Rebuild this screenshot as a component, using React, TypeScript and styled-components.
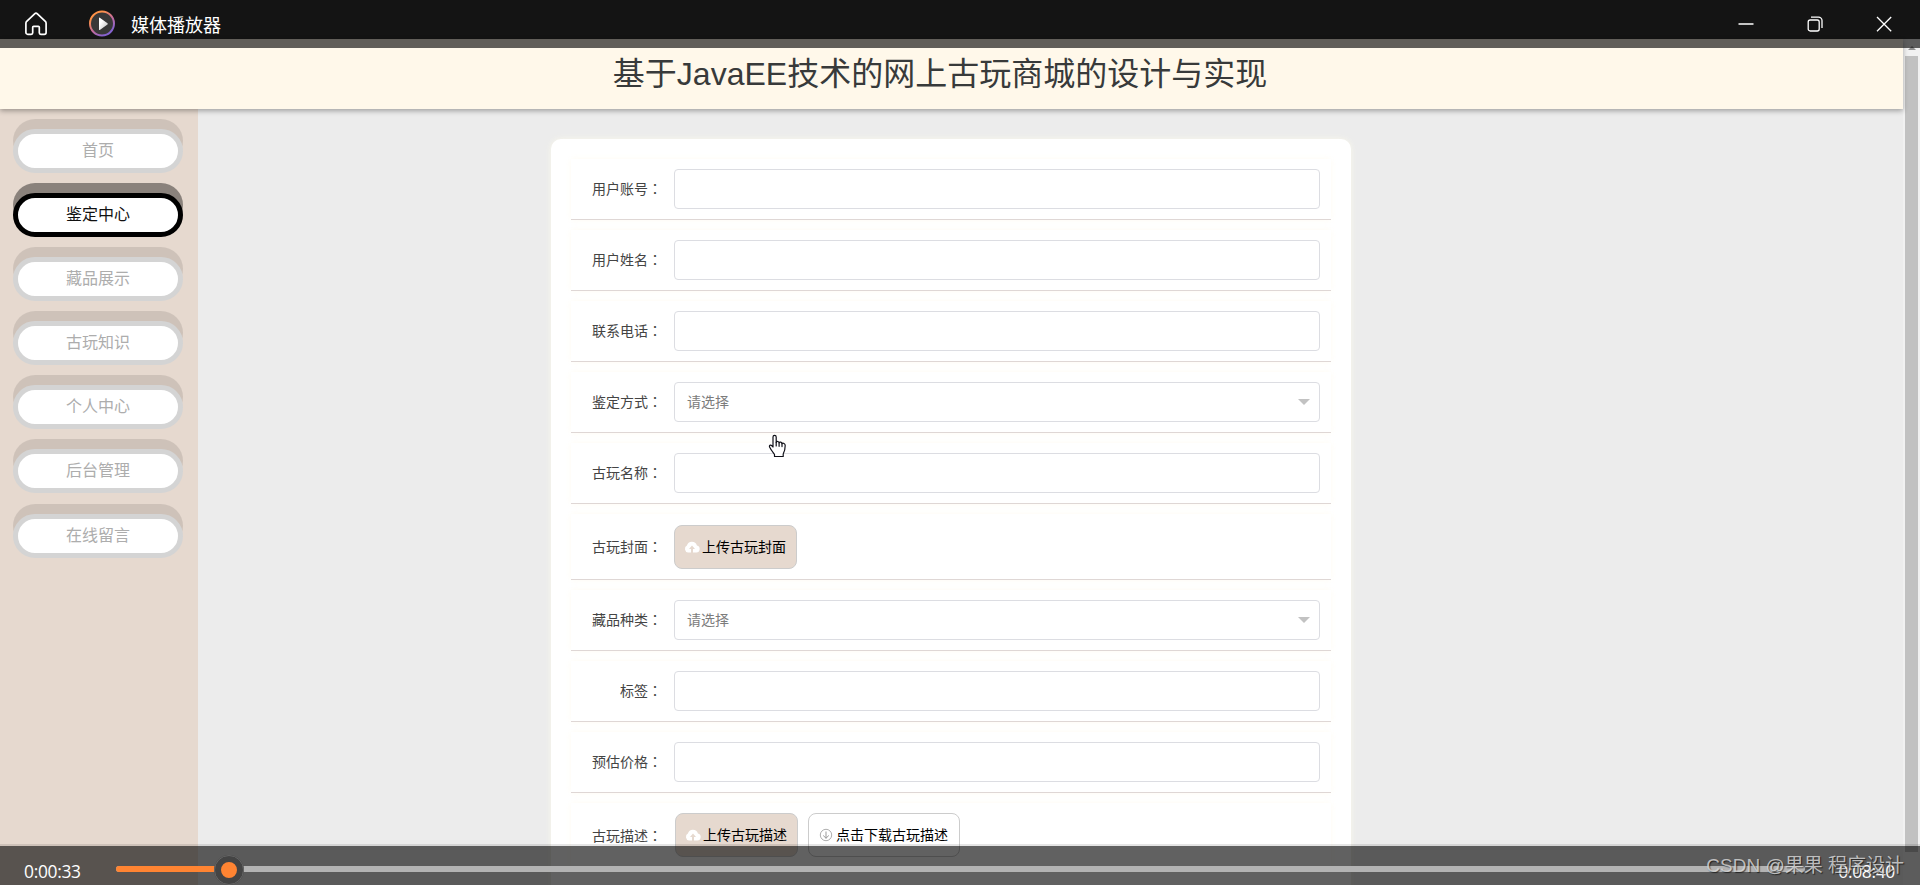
import React from 'react';
import styled, { createGlobalStyle } from 'styled-components';

const Global = createGlobalStyle`
  * { box-sizing: border-box; }
  html, body { margin: 0; padding: 0; overflow: hidden; }
  body { font-family: "Liberation Sans", "Noto Sans CJK SC", sans-serif; }
`;

const Player = styled.div`
  position: relative;
  display: flex;
  flex-direction: column;
  width: 1920px;
  height: 885px;
  overflow: hidden;
  background: #ececec;
`;
const TitleBar = styled.header`
  display: flex;
  align-items: center;
  height: 39px;
  flex: none;
  padding: 9px 27px 0 24px;
  background: #141414;
  color: #fff;
`;
const AppName = styled.span`
  flex: 1;
  margin-left: 15px;
  font: 400 18px/26px "Noto Sans CJK SC", sans-serif;
  padding-bottom: 1px;
`;
const HomeIcon = styled.svg`
  width: 24px;
  height: 24px;
  margin-right: 40px;
`;
const WindowButtons = styled.div`
  display: flex;
  gap: 51px;
  padding-bottom: 1px;
`;
const Page = styled.div`
  position: relative;
  display: flex;
  flex: 1;
  min-height: 0;
`;
const Content = styled.div`
  display: flex;
  flex-direction: column;
  width: 1903px;
`;
const Banner = styled.h1`
  position: relative;
  z-index: 1;
  flex: none;
  height: 70px;
  margin: 0;
  padding: 15px 23px 0 0;
  background: #fff8ea;
  box-shadow: 0 2px 5px rgba(0, 0, 0, 0.32);
  color: #383a3a;
  font-weight: 400;
  font-size: 32px;
  line-height: 40px;
  text-align: center;
`;
const Body = styled.div`
  display: flex;
  flex: 1;
  min-height: 0;
`;
const Sidebar = styled.nav`
  display: flex;
  flex-direction: column;
  gap: 20.1px;
  width: 198px;
  flex: none;
  padding: 20px 15px 0 13px;
  background: #e6d9cf;
`;
const NavItem = styled.a<{ $active?: boolean }>`
  flex: none;
  height: 44px;
  border: 5px solid ${p => (p.$active ? '#000' : '#d4d4d4')};
  border-radius: 22px;
  background: #fff;
  box-shadow: 0 -10px 0 ${p => (p.$active ? 'rgba(0,0,0,.4)' : 'rgba(0,0,0,.1)')};
  color: ${p => (p.$active ? '#111' : '#adadad')};
  font: 400 16px/31px "Noto Sans CJK SC", sans-serif;
  text-align: center;
`;
const Main = styled.main`
  flex: 1;
  padding: 30px 0 0 353px;
`;
const Card = styled.form`
  display: flex;
  flex-direction: column;
  gap: 10px;
  width: 800px;
  height: 900px;
  padding: 20px;
  border-radius: 10px;
  background: #fff;
  box-shadow: 0 0 6px rgba(255, 253, 235, 0.7);
`;
const Row = styled.div<{ $tall?: boolean }>`
  display: flex;
  align-items: center;
  flex: none;
  height: ${p => (p.$tall ? 66 : 61)}px;
  padding-right: 11px;
  border-bottom: 1px solid #dfd7d5;
  box-shadow: 0 0 6px rgba(255, 248, 225, 0.4);
`;
const Label = styled.label`
  width: 103px;
  padding: 0 12px 2px 0;
  color: #444;
  font: 400 14px/20px "Noto Sans CJK SC", sans-serif;
  text-align: right;
  white-space: nowrap;
`;
const Colon = styled.span`
  font-family: "Noto Sans CJK TC", sans-serif;
`;
const Field = styled.div`
  display: flex;
  align-items: center;
  justify-content: space-between;
  flex: 1;
  height: 40px;
  padding: 0 9px 2px 12px;
  border: 1px solid #dcdde2;
  border-radius: 4px;
  background: #fff;
  color: #7c7c7c;
  font: 400 14px/20px "Noto Sans CJK SC", sans-serif;
`;
const Caret = styled.i`
  border: 6px solid transparent;
  border-top-color: #c2c2c2;
  border-bottom: 0;
  margin-top: 1px;
`;
const Actions = styled.div<{ $indent?: boolean }>`
  display: flex;
  gap: 10px;
  padding: ${p => (p.$indent ? '0 0 1px 1px' : '1px 0 0 0')};
`;
const FileButton = styled.button<{ $plain?: boolean }>`
  display: flex;
  align-items: center;
  gap: ${p => (p.$plain ? 4 : 3)}px;
  width: ${p => (p.$plain ? 152 : 123)}px;
  height: 44px;
  padding: 0 0 0 ${p => (p.$plain ? 10 : 9)}px;
  border: 1px solid #ccc;
  border-radius: 8px;
  background: ${p => (p.$plain ? '#fff' : '#e6d9cf')};
  color: #000;
  font: 400 14px/20px "Noto Sans CJK SC", sans-serif;
  white-space: nowrap;
`;
const ButtonText = styled.span`
  margin-left: -1px;
  padding-bottom: 2px;
`;
const Scrollbar = styled.div`
  display: flex;
  flex-direction: column;
  align-items: center;
  width: 17px;
  padding: 7px 0 0 0;
  background: #f1f1f1;
`;
const ScrollUp = styled.i`
  border: 4px solid transparent;
  border-bottom-color: #909090;
  border-top: 0;
  margin-bottom: 6px;
`;
const ScrollThumb = styled.div`
  width: 13px;
  height: 796px;
  background: #c1c1c1;
`;
const TopShade = styled.div`
  position: absolute;
  z-index: 2;
  inset: 0 0 auto 0;
  height: 9px;
  background: rgba(0, 0, 0, 0.62);
`;
const Controls = styled.footer`
  position: absolute;
  z-index: 3;
  inset: auto 0 0 0;
  display: flex;
  align-items: center;
  height: 41px;
  padding: 10px 25px 0 24px;
  border-top: 2px solid rgba(0, 0, 0, 0.1);
  background: rgba(0, 0, 0, 0.62);
  background-clip: padding-box;
  color: #fff;
  font: 17.4px/24px "Open Sans", "Noto Sans", sans-serif;
`;
const Time = styled.span<{ $end?: boolean }>`
  width: ${p => (p.$end ? 'auto' : '92px')};
  margin-left: ${p => (p.$end ? 'auto' : 0)};
  letter-spacing: -0.3px;
`;
const Track = styled.div`
  display: flex;
  align-items: center;
  width: 1689px;
  height: 6px;
  margin-top: -3px;
  border-radius: 3px;
  background: #b3b3b3;
`;
const Played = styled.div`
  width: 99px;
  height: 6px;
  border-radius: 3px 0 0 3px;
  background: #ff8432;
`;
const Thumb = styled.div`
  width: 30px;
  height: 30px;
  flex: none;
  margin: 2px 0 0 -1px;
  border: 7px solid #444;
  border-radius: 50%;
  background: #ff8432;
  outline: 1px solid #666;
  outline-offset: -1px;
`;
const Watermark = styled.div`
  position: absolute;
  z-index: 4;
  right: 16px;
  bottom: 4px;
  color: rgba(222, 222, 222, 0.8);
  font: 400 19px/30px "Liberation Sans", "Noto Sans CJK SC", sans-serif;
  text-shadow: 1px 1px 1px rgba(0, 0, 0, 0.6);
  white-space: nowrap;
`;
const Cursor = styled.svg`
  position: absolute;
  z-index: 3;
  left: 768px;
  top: 434px;
  width: 19px;
  height: 24px;
`;

const CloudIcon = () => (
  <svg width="16" height="12" viewBox="0 0 16 12">
    <path fill="#fff" d="M4 11.5A3.7 3.7 0 0 1 2.9 4.6 5.2 5.2 0 0 1 12.9 4.4 3.6 3.6 0 0 1 12.3 11.5H9V8h2L8 4.5 5 8h2v3.5z" />
  </svg>
);
const DownloadIcon = () => (
  <svg width="14" height="14" viewBox="0 0 14 14" fill="none" stroke="#999">
    <circle cx="7" cy="7" r="5.7" strokeWidth="0.8" />
    <path d="M7 3.5v7M4.2 7.5 7 10.2l2.8-2.7" />
  </svg>
);

const menu = ['首页', '鉴定中心', '藏品展示', '古玩知识', '个人中心', '后台管理', '在线留言'];

type Item = { label: string; kind?: 'select' | 'upload'; download?: boolean };
const items: Item[] = [
  { label: '用户账号' },
  { label: '用户姓名' },
  { label: '联系电话' },
  { label: '鉴定方式', kind: 'select' },
  { label: '古玩名称' },
  { label: '古玩封面', kind: 'upload' },
  { label: '藏品种类', kind: 'select' },
  { label: '标签' },
  { label: '预估价格' },
  { label: '古玩描述', kind: 'upload', download: true },
];

const FormRow = ({ label, kind, download }: Item) => (
  <Row $tall={kind === 'upload'}>
    <Label>{label}<Colon lang="zh-TW">：</Colon></Label>
    {kind === 'upload' ? (
      <Actions $indent={download}>
        <FileButton type="button"><CloudIcon /><ButtonText>上传{label}</ButtonText></FileButton>
        {download && <FileButton type="button" $plain><DownloadIcon /><ButtonText>点击下载{label}</ButtonText></FileButton>}
      </Actions>
    ) : (
      <Field>{kind === 'select' && <>请选择<Caret /></>}</Field>
    )}
  </Row>
);

export default function App() {
  return (
    <Player>
      <Global />
      <TitleBar>
        <HomeIcon viewBox="0 0 24 24" fill="none" stroke="#fff" strokeWidth="1.7" strokeLinejoin="round">
          <path d="M1.9 11.2a2.5 2.5 0 0 1 .8-1.8L10.6 1.9a2 2 0 0 1 2.8 0L21.3 9.4a2.5 2.5 0 0 1 .8 1.8V20.5a1.8 1.8 0 0 1-1.8 1.8h-3.5a1.5 1.5 0 0 1-1.5-1.5v-5.5a1 1 0 0 0-1-1h-4.6a1 1 0 0 0-1 1v5.5a1.5 1.5 0 0 1-1.5 1.5H3.7a1.8 1.8 0 0 1-1.8-1.8z" />
        </HomeIcon>
        <svg width="28" height="28" viewBox="0 0 28 28">
          <defs>
            <linearGradient id="ring" x1="0.1" y1="0" x2="0.8" y2="1">
              <stop offset="0.2" stopColor="#ff9248" />
              <stop offset="0.55" stopColor="#c56c9c" />
              <stop offset="0.9" stopColor="#8562cf" />
            </linearGradient>
            <linearGradient id="play" x1="0" y1="0" x2="1" y2="1">
              <stop offset="0.3" stopColor="#fff" />
              <stop offset="1" stopColor="#bbb" />
            </linearGradient>
          </defs>
          <circle cx="14" cy="13.5" r="12" fill="#383838" stroke="url(#ring)" strokeWidth="2" />
          <path d="M11 8v11.6a.5.5 0 0 0 .8.4l7.7-5.5a.8.8 0 0 0 0-1.2l-7.7-5.6a.5.5 0 0 0-.8.3z" fill="url(#play)" />
        </svg>
        <AppName>媒体播放器</AppName>
        <WindowButtons>
          <svg width="18" height="18" viewBox="0 0 18 18"><path d="M1.5 9h15" stroke="#fff" strokeWidth="1.5" /></svg>
          <svg width="18" height="18" viewBox="0 0 18 18" fill="none" stroke="#fff" strokeWidth="1.3">
            <rect x="2.2" y="5" width="11" height="11" rx="2" />
            <path d="M5 2.1h7.5a3.5 3.5 0 0 1 3.5 3.5V13" />
          </svg>
          <svg width="18" height="18" viewBox="0 0 18 18"><path d="M2 2 16.2 16.2M16.2 2 2 16.2" stroke="#fff" strokeWidth="1.3" /></svg>
        </WindowButtons>
      </TitleBar>

      <Page>
        <Content>
          <Banner>基于JavaEE技术的网上古玩商城的设计与实现</Banner>
          <Body>
            <Sidebar>
              {menu.map((name, i) => <NavItem key={name} $active={i === 1}>{name}</NavItem>)}
            </Sidebar>
            <Main>
              <Card>{items.map(item => <FormRow key={item.label} {...item} />)}</Card>
            </Main>
          </Body>
        </Content>
        <Scrollbar><ScrollUp /><ScrollThumb /></Scrollbar>
        <TopShade />
      </Page>

      <Cursor viewBox="0 0 19 24" fill="#fff" stroke="#101018" strokeWidth="1.2" strokeLinejoin="round" strokeLinecap="round">
        <path d="M5 13V3a1.6 1.6 0 0 1 3.2 0v5.5C8.6 7 11 7.2 11.1 8.8 11.7 7.6 13.9 8 14 9.6 15 8.8 17.2 9.3 17.2 11.5c0 4-.6 6-2 8.5V22.5H6.5V20.5C5 18.5 3 16 1.7 13.3.6 11 3 10 5 13z" />
        <path d="M8.2 8.5V12M11.1 8.8V12.3M14 9.6V12.6" />
      </Cursor>

      <Controls>
        <Time>0:00:33</Time>
        <Track><Played /><Thumb /></Track>
        <Time $end>0:08:40</Time>
      </Controls>
      <Watermark>CSDN @果果 程序设计</Watermark>
    </Player>
  );
}
